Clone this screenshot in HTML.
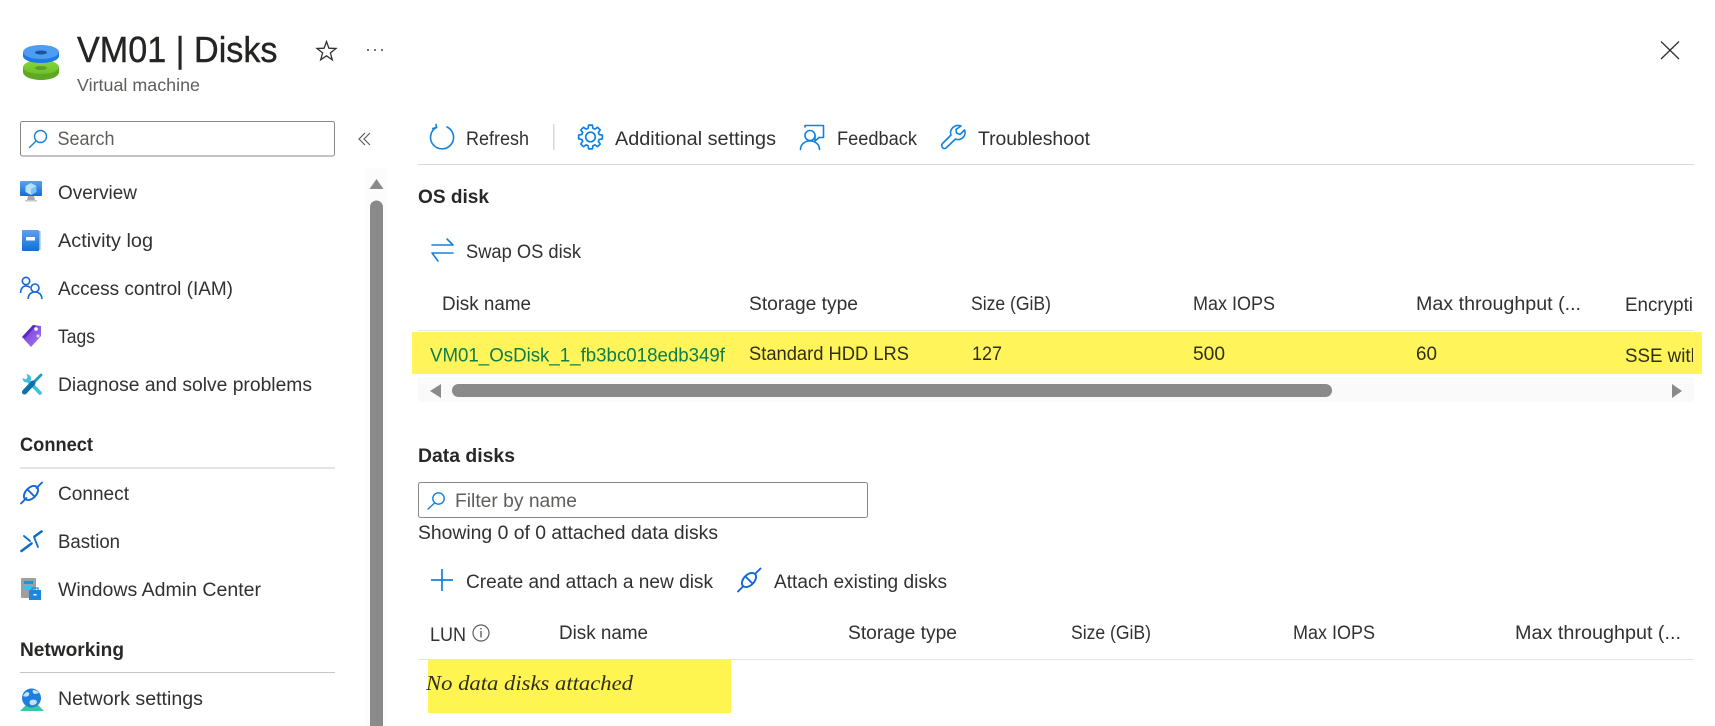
<!DOCTYPE html>
<html lang="en">
<head>
<meta charset="utf-8">
<title>VM01 | Disks</title>
<style>
html,body{margin:0;padding:0;background:#fff;width:1715px;height:726px;overflow:hidden}
svg{display:block}
text{font-family:"Liberation Sans",sans-serif;font-size:19px;fill:#323130}
.b{font-weight:700;fill:#292827}
.g{fill:#605e5c}
.ic{fill:none;stroke:#1282de;stroke-width:1.700;stroke-linecap:round;stroke-linejoin:round}
</style>
</head>
<body>
<svg width="1715" height="726" viewBox="0 0 1715 726" xmlns="http://www.w3.org/2000/svg">
<defs>
<linearGradient id="bl" x1="0" y1="0" x2="0" y2="1"><stop offset="0" stop-color="#5ea0ef"/><stop offset="1" stop-color="#0f6fd6"/></linearGradient>
<linearGradient id="gr" x1="0" y1="0" x2="0" y2="1"><stop offset="0" stop-color="#8ad63a"/><stop offset="1" stop-color="#6cc02c"/></linearGradient>
<linearGradient id="pu" x1="0" y1="0" x2="1" y2="1"><stop offset="0" stop-color="#6d35cf"/><stop offset="1" stop-color="#a67af4"/></linearGradient>
</defs>
<rect width="1715" height="726" fill="#fff"/>

<!-- header disk icon -->
<path d="M23 67v5c0 4.500 8 8 18 8s18-3.500 18-8v-5z" fill="#5fa824"/>
<ellipse cx="41" cy="67" rx="18" ry="7" fill="url(#gr)"/>
<ellipse cx="41" cy="68" rx="6" ry="2" fill="#5e9c2e"/>
<path d="M23 52v4c0 4 8 7 18 7s18-3 18-7v-4z" fill="#1b7be6"/>
<ellipse cx="41" cy="52" rx="18" ry="7" fill="#4f9cf0"/>
<ellipse cx="41" cy="52.500" rx="6" ry="2" fill="#15569f"/>

<text x="77" y="62" style="font-size:36px;fill:#252423;stroke:#252423;stroke-width:.4" textLength="200.500" lengthAdjust="spacingAndGlyphs">VM01 | Disks</text>
<text x="77" y="91" style="font-size:17.500px;fill:#605e5c" textLength="123" lengthAdjust="spacingAndGlyphs">Virtual machine</text>
<path d="M326.500 41.500l2.400 6.700 7.100.300-5.600 4.400 1.900 6.900-5.800-4-5.800 4 1.900-6.900-5.600-4.400 7.100-.300z" fill="none" stroke="#323130" stroke-width="1.300" stroke-linejoin="miter"/>
<circle cx="368" cy="50" r="1" fill="#444"/><circle cx="375" cy="50" r="1" fill="#444"/><circle cx="382" cy="50" r="1" fill="#444"/>
<path d="M1661 41.500l18 17.500M1679 41.500l-18 17.500" stroke="#323130" stroke-width="1.300" fill="none"/>

<!-- left search -->
<rect x="20.500" y="121.500" width="314" height="34.500" rx="2" fill="#fff" stroke="#8a8886" stroke-width="1"/>
<circle cx="40.500" cy="136.500" r="6" class="ic" style="stroke-width:1.400"/>
<path d="M36 141l-6.500 6.500" class="ic" style="stroke-width:1.400"/>
<text x="57.500" y="145" class="g" textLength="57" lengthAdjust="spacingAndGlyphs">Search</text>
<path d="M365 133l-6 6 6 6M370 133l-6 6 6 6" fill="none" stroke="#605e5c" stroke-width="1.200"/>

<!-- sidebar scrollbar -->
<rect x="365" y="168" width="22" height="558" fill="#fcfcfc"/>
<path d="M369.500 189l7-10 7 10z" fill="#8a8a8a"/>
<path d="M370 726V207a6.500 6.500 0 0 1 13 0V726z" fill="#8a8a8a"/>

<!-- nav icons -->
<g>
<rect x="20" y="181" width="22" height="15" rx="1" fill="url(#bl)"/>
<path d="M28 196h6l1 4h-8z" fill="#a9a9a9"/><rect x="25" y="200" width="12" height="1.500" fill="#c8c8c8"/>
<path d="M31 183l5.500 3v6l-5.500 3-5.500-3v-6z" fill="#b7e2fb"/>
<path d="M31 189l5.500-3v6l-5.500 3z" fill="#76c3f5"/>
</g>
<g>
<rect x="22" y="230" width="17" height="21" rx="1" fill="url(#bl)"/>
<rect x="39" y="231" width="1.500" height="19" fill="#8ab8e8"/>
<rect x="26" y="237" width="9" height="3.500" fill="#fff"/>
</g>
<g fill="none" stroke="#1467d6" stroke-width="1.600">
<circle cx="26" cy="281" r="3.700"/>
<path d="M20.500 293c.5-4.500 2.500-7 5.500-7 1.500 0 3 .5 4 1.500"/>
<circle cx="35" cy="288" r="4"/>
<path d="M28 299c.5-4.500 3-7 7-7s6.500 2.500 7 7"/>
</g>
<g>
<path d="M22 337l11-12 8 1v10l-10 11z" fill="url(#pu)"/>
<path d="M22 337l11-12 3 .500-11 13z" fill="#5d29bd"/>
<circle cx="36" cy="329" r="1.800" fill="#fff"/>
<circle cx="38" cy="336" r="1.500" fill="#e4d9f8"/>
</g>
<g fill="none" stroke-linecap="round">
<path d="M28.500 381l11.500 12" stroke="#3cc0dc" stroke-width="3.600"/>
<path d="M22.500 378c0 3.500 3 5.500 6.500 4l1.500-1.500c1.500-3-.5-6-4-6.500l1 3.500-1.500 2z" fill="#3cc0e4"/>
<path d="M41 375l-7 7" stroke="#1a9bc4" stroke-width="2.800"/>
<path d="M33 383l-8.500 9" stroke="#0f6fa8" stroke-width="5"/>
</g>
<g fill="none" stroke="#1467d6" stroke-width="1.900" stroke-linecap="round">
<path d="M21 503.500l5.500-5.500M36.500 488l5.500-5.500"/>
<ellipse cx="31" cy="493" rx="8.500" ry="5.300" transform="rotate(-45 31 493)"/>
<path d="M27.500 489.500l7 7"/>
</g>
<g fill="none" stroke="#0f6cc9" stroke-linecap="round">
<path d="M21.500 551l10-7.500M34.500 536.500l7-5" stroke-width="2.600"/>
<path d="M24 536l6 5M34 537l4 10" stroke-width="1.800"/>
</g>
<g>
<rect x="21" y="578" width="15" height="20" rx="1" fill="#9e9e9e"/>
<rect x="24" y="581" width="9" height="3" fill="#1f8fe0"/>
<rect x="24" y="586" width="9" height="3" fill="#32c5ee"/>
<rect x="29" y="590" width="12" height="10" fill="#1d86df"/>
<rect x="32" y="588" width="6" height="3" fill="none" stroke="#1d86df" stroke-width="1.200"/>
<rect x="33.500" y="594" width="3" height="1.500" fill="#fff"/>
</g>
<g>
<path d="M20 711l6-6h12l6 6z" fill="#35c9a4"/>
<circle cx="31.500" cy="698" r="9.500" fill="#1f7fdc"/>
<path d="M25 693c3-2 5 0 4 2s-4 2-6 1zM31 700c3-1 6 0 6 2s-4 4-6 3-2-4 0-5zM33 690c2 0 5 1 6 3l-4 1c-2 0-3-3-2-4z" fill="#bfe4f8"/>
</g>

<!-- nav text -->
<text x="58" y="199" textLength="79" lengthAdjust="spacingAndGlyphs">Overview</text>
<text x="58" y="247" textLength="95" lengthAdjust="spacingAndGlyphs">Activity log</text>
<text x="58" y="295" textLength="175" lengthAdjust="spacingAndGlyphs">Access control (IAM)</text>
<text x="58" y="343" textLength="37" lengthAdjust="spacingAndGlyphs">Tags</text>
<text x="58" y="391" textLength="254" lengthAdjust="spacingAndGlyphs">Diagnose and solve problems</text>
<text x="20" y="451" class="b" textLength="73" lengthAdjust="spacingAndGlyphs">Connect</text>
<rect x="20" y="467.500" width="315" height="1" fill="#c8c6c4"/>
<text x="58" y="500" textLength="71" lengthAdjust="spacingAndGlyphs">Connect</text>
<text x="58" y="548" textLength="62" lengthAdjust="spacingAndGlyphs">Bastion</text>
<text x="58" y="596" textLength="203" lengthAdjust="spacingAndGlyphs">Windows Admin Center</text>
<text x="20" y="656" class="b" textLength="104" lengthAdjust="spacingAndGlyphs">Networking</text>
<rect x="20" y="672" width="315" height="1" fill="#c8c6c4"/>
<text x="58" y="705" textLength="145" lengthAdjust="spacingAndGlyphs">Network settings</text>

<!-- toolbar -->
<path d="M447 127a11.500 11.500 0 1 1-10.500 .300" class="ic" style="stroke-width:1.600"/>
<path d="M436 124.500l.5 3-3.800 1" class="ic" style="stroke-width:1.600"/>
<text x="466" y="145" textLength="63" lengthAdjust="spacingAndGlyphs">Refresh</text>
<rect x="553" y="124" width="1.500" height="26" fill="#d8d8d8"/>
<g transform="translate(590.500,137)" class="ic" style="stroke-width:1.700">
<path d="M8.650-2.480L11.850-1.880 11.850 1.880 8.650 2.480 7.870 4.360 9.710 7.050 7.050 9.710 4.360 7.870 2.480 8.650 1.880 11.850-1.880 11.850-2.480 8.650-4.360 7.870-7.050 9.710-9.710 7.050-7.870 4.360-8.650 2.480-11.850 1.880-11.850-1.880-8.650-2.480-7.870-4.360-9.710-7.050-7.050-9.710-4.360-7.870-2.480-8.650-1.880-11.850 1.880-11.850 2.480-8.650 4.360-7.870 7.050-9.710 9.710-7.050 7.870-4.360z"/>
<circle r="4.800"/>
</g>
<text x="615" y="145" textLength="161" lengthAdjust="spacingAndGlyphs">Additional settings</text>
<g class="ic" style="stroke-width:1.600">
<path d="M805 127v-1.500h18.500v12H819"/>
<path d="M819 137.500l-4 3.500v-5.500"/>
<circle cx="810" cy="135.500" r="5" fill="#fff"/>
<path d="M800.500 149.500c0-5 4-8.500 9.500-8.500s9.500 3.500 9.500 8.500"/>
</g>
<text x="837" y="145" textLength="80" lengthAdjust="spacingAndGlyphs">Feedback</text>
<path d="M961 126C955 124 949 129 951 135L942.500 143.500C940.500 146 943 150 946 148L955.500 139C961 141.500 967 135.500 964.500 130L960 134.500 956.500 133 956 129.500z" class="ic" style="stroke-width:1.600"/>
<text x="978" y="145" textLength="112" lengthAdjust="spacingAndGlyphs">Troubleshoot</text>
<rect x="418" y="164" width="1276" height="1" fill="#d9d9d9"/>

<!-- OS disk -->
<text x="418" y="203" class="b" textLength="71" lengthAdjust="spacingAndGlyphs">OS disk</text>
<path d="M432 245h21l-6-6M453 253h-21l6 8" class="ic" style="stroke-width:1.600"/>
<text x="466" y="258" textLength="115" lengthAdjust="spacingAndGlyphs">Swap OS disk</text>
<text x="442" y="310" textLength="89" lengthAdjust="spacingAndGlyphs">Disk name</text>
<text x="749" y="310" textLength="109" lengthAdjust="spacingAndGlyphs">Storage type</text>
<text x="971" y="310" textLength="80" lengthAdjust="spacingAndGlyphs">Size (GiB)</text>
<text x="1193" y="310" textLength="82" lengthAdjust="spacingAndGlyphs">Max IOPS</text>
<text x="1416" y="310" textLength="165" lengthAdjust="spacingAndGlyphs">Max throughput (...</text>
<text x="1625" y="311" textLength="68" lengthAdjust="spacingAndGlyphs">Encrypti</text>
<rect x="418" y="330" width="1276" height="1" fill="#e6e6e6"/>
<rect x="412" y="332" width="1290" height="42" fill="#fff55a"/>
<text x="430" y="361.500" style="fill:#0c7d4f" textLength="295" lengthAdjust="spacingAndGlyphs">VM01_OsDisk_1_fb3bc018edb349f</text>
<text x="749" y="360" style="fill:#2f2e1e" textLength="160" lengthAdjust="spacingAndGlyphs">Standard HDD LRS</text>
<text x="972" y="360" style="fill:#2f2e1e" textLength="30" lengthAdjust="spacingAndGlyphs">127</text>
<text x="1193" y="360" style="fill:#2f2e1e" textLength="32" lengthAdjust="spacingAndGlyphs">500</text>
<text x="1416" y="360" style="fill:#2f2e1e" textLength="21" lengthAdjust="spacingAndGlyphs">60</text>
<text x="1625" y="362" style="fill:#2f2e1e" textLength="76" lengthAdjust="spacingAndGlyphs">SSE with</text>
<rect x="1693" y="332" width="9" height="42" fill="#fff55a"/>
<rect x="418" y="377" width="1276" height="25" fill="#fafafa"/>
<path d="M441 384v14l-11-7z" fill="#8a8a8a"/>
<path d="M1672 384v14l10-7z" fill="#8a8a8a"/>
<rect x="452" y="384" width="880" height="13" rx="6.500" fill="#8a8a8a"/>

<!-- Data disks -->
<text x="418" y="462" class="b" textLength="97" lengthAdjust="spacingAndGlyphs">Data disks</text>
<rect x="418.500" y="482.500" width="449" height="35" rx="2" fill="#fff" stroke="#8a8886" stroke-width="1"/>
<circle cx="438.500" cy="498.500" r="5.700" class="ic" style="stroke-width:1.400"/>
<path d="M434 503.500l-6 5.500" class="ic" style="stroke-width:1.400"/>
<text x="455" y="507" class="g" textLength="122" lengthAdjust="spacingAndGlyphs">Filter by name</text>
<text x="418" y="539" textLength="300" lengthAdjust="spacingAndGlyphs">Showing 0 of 0 attached data disks</text>
<path d="M442 569v22M431 580h22" fill="none" stroke="#1282de" stroke-width="1.700"/>
<text x="466" y="588" textLength="247" lengthAdjust="spacingAndGlyphs">Create and attach a new disk</text>
<g fill="none" stroke="#1467d6" stroke-width="1.900" stroke-linecap="round">
<path d="M738 591.500l5.500-5.500M755 574l5.500-5.500"/>
<ellipse cx="749" cy="580" rx="8.500" ry="5.300" transform="rotate(-45 749 580)"/>
<path d="M745.500 576.500l7 7"/>
</g>
<text x="774" y="588" textLength="173" lengthAdjust="spacingAndGlyphs">Attach existing disks</text>
<text x="430" y="641" textLength="36" lengthAdjust="spacingAndGlyphs">LUN</text>
<circle cx="481" cy="633" r="8" fill="none" stroke="#605e5c" stroke-width="1.200"/>
<rect x="480.300" y="631" width="1.400" height="6.500" fill="#605e5c"/><rect x="480.300" y="628" width="1.400" height="1.500" fill="#605e5c"/>
<text x="559" y="639" textLength="89" lengthAdjust="spacingAndGlyphs">Disk name</text>
<text x="848" y="639" textLength="109" lengthAdjust="spacingAndGlyphs">Storage type</text>
<text x="1071" y="639" textLength="80" lengthAdjust="spacingAndGlyphs">Size (GiB)</text>
<text x="1293" y="639" textLength="82" lengthAdjust="spacingAndGlyphs">Max IOPS</text>
<text x="1515" y="639" textLength="166" lengthAdjust="spacingAndGlyphs">Max throughput (...</text>
<rect x="418" y="659" width="1276" height="1" fill="#e6e6e6"/>
<rect x="428" y="660" width="303" height="53" fill="#fff550"/>
<text x="426" y="690" style="font-family:'Liberation Serif',serif;font-style:italic;font-size:21px;fill:#2f2e1e" textLength="207" lengthAdjust="spacingAndGlyphs">No data disks attached</text>
</svg>
</body>
</html>
